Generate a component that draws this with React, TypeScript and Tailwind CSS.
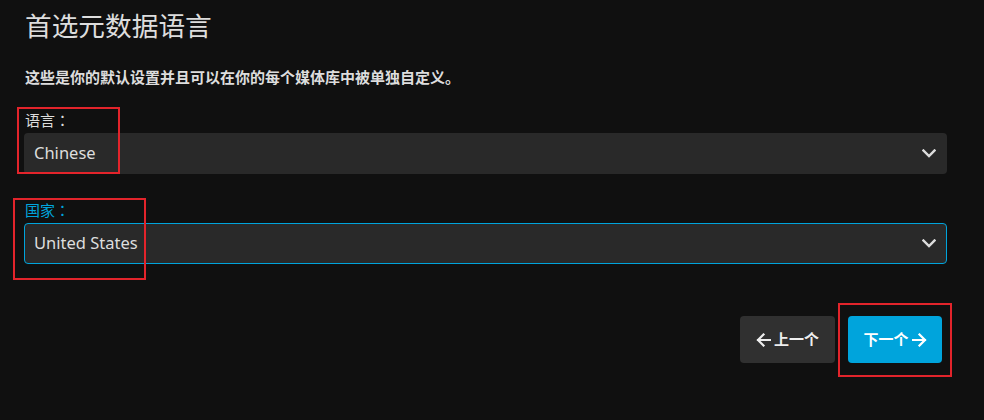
import React from "react";

const font = { fontFamily: '"Noto Sans", "Noto Sans CJK SC", sans-serif' };
const cjk = { fontFamily: '"Noto Sans CJK SC", "Noto Sans", sans-serif' };
const tc = { fontFamily: '"Noto Sans CJK TC", "Noto Sans CJK SC", sans-serif' };

function Chevron() {
  return (
    <svg width="14" height="9" viewBox="0 0 14 9" className="shrink-0">
      <path d="M1.5 1.5 L7 7 L12.5 1.5" fill="none" stroke="#dddddd" strokeWidth="2.4" strokeLinecap="square" />
    </svg>
  );
}

function ArrowL() {
  return (
    <svg width="15" height="14" viewBox="0 0 15 14" className="shrink-0">
      <path d="M14 7 H2 M7.5 1.5 L2 7 L7.5 12.5" fill="none" stroke="currentColor" strokeWidth="2.2" strokeLinecap="square" />
    </svg>
  );
}

function ArrowR() {
  return (
    <svg width="15" height="14" viewBox="0 0 15 14" className="shrink-0">
      <path d="M1 7 H13 M7.5 1.5 L13 7 L7.5 12.5" fill="none" stroke="currentColor" strokeWidth="2.2" strokeLinecap="square" />
    </svg>
  );
}

export default function App() {
  return (
    <div className="relative w-[984px] h-[420px] bg-[#101010] overflow-hidden" style={font}>
      <div className="pl-[24px] pr-[37px] flex flex-col">
        <h1 className="mt-[10px] text-[26.7px] leading-[30px] text-[#dddddd] font-normal pl-px" style={cjk}>首选元数据语言</h1>
        <p className="mt-[27px] text-[15px] leading-[20px] font-bold text-[#dddddd] pl-px" style={cjk}>
          这些是你的默认设置并且可以在你的每个媒体库中被单独自定义。
        </p>
        <label className="mt-[23px] text-[15px] leading-[20px] text-[#dddddd] pl-px" style={cjk}>
          语言<span style={tc}>：</span>
        </label>
        <div className="mt-[3px] h-[41px] rounded-[4px] bg-[#292929] flex items-center justify-between pl-[9px] pr-[10px] border border-transparent">
          <span className="text-[16.5px] text-[#dddddd]">Chinese</span>
          <Chevron />
        </div>
        <label className="mt-[26px] text-[15px] leading-[20px] text-[#00a4dc] pl-px" style={cjk}>
          国家<span style={tc}>：</span>
        </label>
        <div className="mt-[3px] h-[41px] rounded-[4px] bg-[#292929] flex items-center justify-between pl-[9px] pr-[10px] border border-[#00a4dc]">
          <span className="text-[16.5px] text-[#dddddd]">United States</span>
          <Chevron />
        </div>
        <div className="mt-[52px] flex justify-end gap-[13px] pr-[5px]">
          <button className="w-[95px] h-[47px] rounded-[4px] bg-[#303030] text-[#eeeeee] flex items-center justify-center gap-[3px] text-[15px] font-bold" style={cjk}>
            <ArrowL />
            <span>上一个</span>
          </button>
          <button className="w-[94px] h-[47px] rounded-[4px] bg-[#00a4dc] text-white flex items-center justify-center gap-[3px] text-[15px] font-bold" style={cjk}>
            <span>下一个</span>
            <ArrowR />
          </button>
        </div>
      </div>
      <div className="absolute left-[17px] top-[107px] w-[103px] h-[67px] border-2 border-[#e3242b]" />
      <div className="absolute left-[13px] top-[198px] w-[133px] h-[82px] border-2 border-[#e3242b]" />
      <div className="absolute left-[838px] top-[303px] w-[114px] h-[74px] border-2 border-[#e3242b]" />
    </div>
  );
}
